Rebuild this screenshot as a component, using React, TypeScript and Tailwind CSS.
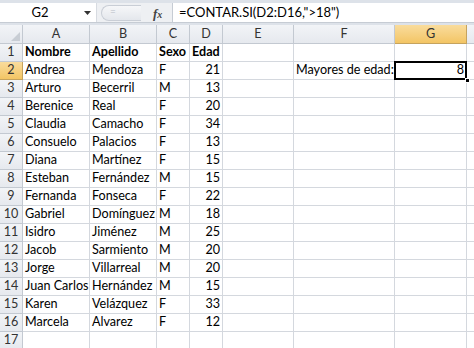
import React from "react";

const cols = [
  { key: "A", w: "w-[67px]" },
  { key: "B", w: "w-[67px]" },
  { key: "C", w: "w-[33px]" },
  { key: "D", w: "w-[33px]" },
  { key: "E", w: "w-[71px]" },
  { key: "F", w: "w-[101px]" },
  { key: "G", w: "w-[72px]" },
  { key: "", w: "w-[30px]" },
];

const rows: [string, string, string, string][] = [
  ["Andrea", "Mendoza", "F", "21"],
  ["Arturo", "Becerril", "M", "13"],
  ["Berenice", "Real", "F", "20"],
  ["Claudia", "Camacho", "F", "34"],
  ["Consuelo", "Palacios", "F", "13"],
  ["Diana", "Martínez", "F", "15"],
  ["Esteban", "Fernández", "M", "15"],
  ["Fernanda", "Fonseca", "F", "22"],
  ["Gabriel", "Domínguez", "M", "18"],
  ["Isidro", "Jiménez", "M", "25"],
  ["Jacob", "Sarmiento", "M", "20"],
  ["Jorge", "Villarreal", "M", "20"],
  ["Juan Carlos", "Hernández", "M", "15"],
  ["Karen", "Velázquez", "F", "33"],
  ["Marcela", "Alvarez", "F", "12"],
];

function Cell({
  w,
  children,
  right,
  bold,
}: {
  w: string;
  children?: React.ReactNode;
  right?: boolean;
  bold?: boolean;
}) {
  return (
    <div
      className={`${w} shrink-0 h-full border-r border-b border-[#d4d8de] flex items-center px-[2px] whitespace-nowrap overflow-visible ${
        right ? "justify-end" : ""
      } ${bold ? "font-bold" : ""}`}
    >
      {children}
    </div>
  );
}

function RowHead({ n, active }: { n: number; active?: boolean }) {
  return (
    <div
      className={`w-[23px] shrink-0 h-full flex items-center justify-center border-r border-b text-[#333] ${
        active
          ? "bg-gradient-to-b from-[#f9dc9c] to-[#f3c564] border-[#c5a35e]"
          : "bg-gradient-to-b from-[#f2f4f7] to-[#e6e9ee] border-[#c3c9d1]"
      }`}
    >
      {n}
    </div>
  );
}

export default function App() {
  return (
    <div className="w-[474px] h-[348px] overflow-hidden bg-white text-[12.6px] text-black font-['Lato',sans-serif]">
      {/* Formula bar */}
      <div className="h-[3px] bg-[#dde2e9]" />
      <div className="h-[20px] flex items-stretch bg-white border-b border-[#c6ccd4]">
        <div className="w-[97px] flex items-center relative border-r border-[#d7dbe1]">
          <span className="w-[80px] text-center text-[13px]">G2</span>
          <svg width="7" height="4" viewBox="0 0 7 4" className="absolute left-[84px] top-[8px]">
            <path d="M0 0h7L3.5 4z" fill="#333" />
          </svg>
        </div>
        <div className="w-[75px] flex items-center bg-[#eef0f3] relative">
          <div className="absolute left-[4px] top-[2px] h-[16px] w-[40px] rounded-l-full border border-[#c9ced6] border-r-0 bg-gradient-to-b from-[#f6f7f9] to-[#e4e7ec]" />
          <span className="absolute left-[13px] top-[1px] text-[10px] text-[#b8bec7]">=</span>
          <span className="absolute left-[56px] top-[1px] font-['Liberation_Serif',serif] italic font-bold text-[13px] text-[#444]">
            f<span className="text-[10px]">x</span>
          </span>
        </div>
        <div className="flex-1 flex items-center pl-[6px] border-l border-[#c6ccd4] whitespace-nowrap text-[13px]">
          =CONTAR.SI(D2:D16,"&gt;18")
        </div>
      </div>
      <div className="h-[2px] bg-[#dde2e9]" />

      {/* Column headers */}
      <div className="h-[19px] flex">
        <div className="w-[23px] shrink-0 h-full relative bg-gradient-to-b from-[#f2f4f7] to-[#e6e9ee] border-r border-b border-[#c3c9d1]">
          <svg width="9" height="9" viewBox="0 0 9 9" className="absolute right-[2px] bottom-[2px]">
            <path d="M9 0v9H0z" fill="#c8cdd4" />
          </svg>
        </div>
        {cols.map((c) => (
          <div
            key={c.w + c.key}
            className={`${c.w} shrink-0 h-full flex items-center justify-center border-r border-b text-[#333] ${
              c.key === "G"
                ? "bg-gradient-to-b from-[#f9dc9c] to-[#f3c564] border-[#c5a35e]"
                : "bg-gradient-to-b from-[#f2f4f7] to-[#e6e9ee] border-[#c3c9d1]"
            }`}
          >
            {c.key}
          </div>
        ))}
      </div>

      {/* Row 1 */}
      <div className="h-[18px] flex">
        <RowHead n={1} />
        <Cell w="w-[67px]" bold>Nombre</Cell>
        <Cell w="w-[67px]" bold>Apellido</Cell>
        <Cell w="w-[33px]" bold>Sexo</Cell>
        <Cell w="w-[33px]" bold>Edad</Cell>
        <Cell w="w-[71px]" />
        <Cell w="w-[101px]" />
        <Cell w="w-[72px]" />
        <Cell w="w-[30px]" />
      </div>

      {rows.map((r, i) => (
        <div key={i} className="h-[18px] flex">
          <RowHead n={i + 2} active={i === 0} />
          <Cell w="w-[67px]">{r[0]}</Cell>
          <Cell w="w-[67px]">{r[1]}</Cell>
          <Cell w="w-[33px]">{r[2]}</Cell>
          <Cell w="w-[33px]" right>{r[3]}</Cell>
          <Cell w="w-[71px]" />
          <Cell w="w-[101px]">{i === 0 ? "Mayores de edad:" : null}</Cell>
          {i === 0 ? (
            <div className="w-[72px] shrink-0 h-full relative">
              <div className="absolute -left-[1px] -top-[1px] w-[73px] h-[19px] border-2 border-black flex items-center justify-end pr-[1px]">
                8
              </div>
              <div className="absolute -right-[3px] -bottom-[3px] w-[5px] h-[5px] bg-black border border-white" />
            </div>
          ) : (
            <Cell w="w-[72px]" />
          )}
          <Cell w="w-[30px]" />
        </div>
      ))}

      <div className="h-[18px] flex">
        <RowHead n={17} />
        {cols.map((c) => (
          <Cell key={c.w + c.key} w={c.w} />
        ))}
      </div>
    </div>
  );
}
